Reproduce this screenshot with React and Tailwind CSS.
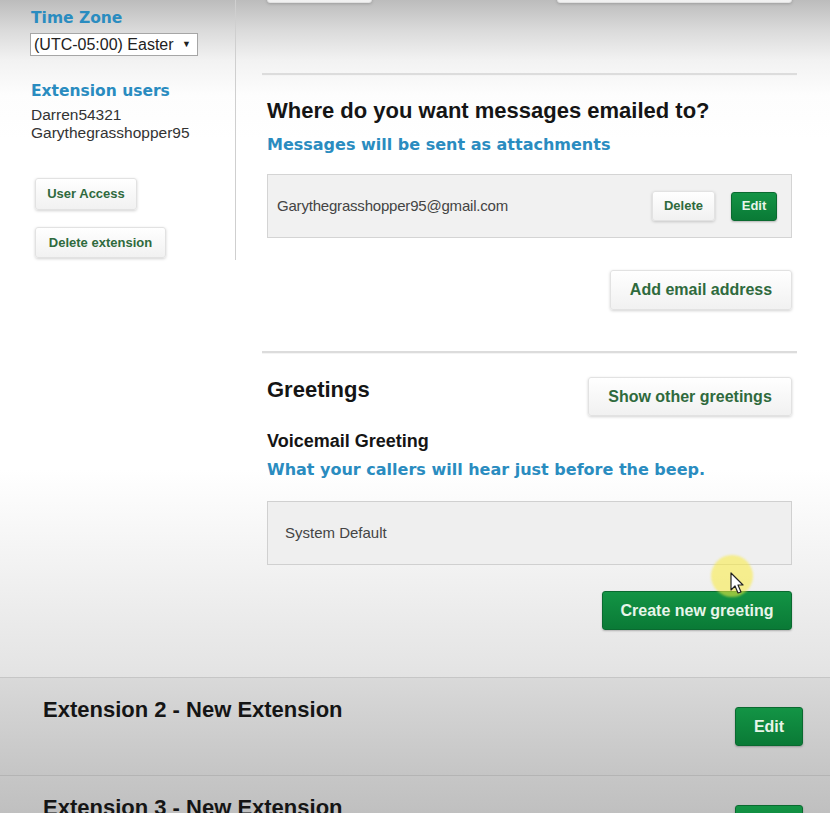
import React from "react";

const lightBtn =
  "rounded-[3px] border border-[#e2e2e2] bg-[linear-gradient(to_bottom,#ffffff,#f1f1f1)] shadow-[0_1px_3px_rgba(0,0,0,0.18)] text-[#2f6a3d] font-bold flex items-center justify-center";
const greenBtn =
  "rounded-[3px] border border-[#0a6a30] bg-[linear-gradient(to_bottom,#139445,#0a7a36)] shadow-[0_1px_2px_rgba(0,0,0,0.25)] text-[#e8f5ea] font-bold flex items-center justify-center";

export default function App() {
  return (
    <div className="relative w-[830px] h-[813px] overflow-hidden font-['Liberation_Sans',Arial,sans-serif] text-[#222]">
      {/* top section */}
      <div className="flex h-[677px] bg-[linear-gradient(to_bottom,#bcbcbc_0px,#dadada_30px,#f2f2f2_60px,#fdfdfd_95px,#ffffff_140px,#ffffff_470px,#f3f3f3_560px,#e3e3e3_677px)]">
        {/* sidebar */}
        <aside className="w-[236px] h-[260px] shrink-0 border-r border-[#cfcfcf] pl-[31px] pt-[8px] flex flex-col items-start">
          <div className="font-['DejaVu_Sans',sans-serif] font-bold text-[15.5px] leading-[20px] text-[#2a8cc0]">
            Time Zone
          </div>
          <div className="mt-[5px] -ml-[1px] w-[168px] h-[23px] border border-[#a6a6a6] bg-white flex items-center pl-[3px] pr-[6px] justify-between text-[16px] text-[#222]">
            <span>(UTC-05:00) Easter</span>
            <span className="text-[9px] text-[#222]">▼</span>
          </div>
          <div className="mt-[25px] font-['DejaVu_Sans',sans-serif] font-bold text-[15.5px] leading-[20px] text-[#2a8cc0]">
            Extension users
          </div>
          <div className="mt-[5px] text-[15.5px] leading-[18px] text-[#333]">Darren54321</div>
          <div className="text-[15.5px] leading-[18px] text-[#333]">Garythegrasshopper95</div>
          <button className={`${lightBtn} mt-[36px] ml-[4px] w-[102px] h-[32px] text-[13px]`}>
            User Access
          </button>
          <button className={`${lightBtn} mt-[17px] ml-[4px] w-[131px] h-[31px] text-[13px]`}>
            Delete extension
          </button>
        </aside>

        {/* main column */}
        <main className="w-[535px] ml-[26px] flex flex-col">
          <div className="flex justify-between px-[5px] -mt-[37px]">
            <div className={`${lightBtn} w-[105px] h-[40px]`} />
            <div className={`${lightBtn} w-[235px] h-[40px]`} />
          </div>
          <div className="mt-[70px] h-[2px] bg-[#dcdcdc] shadow-[0_1px_0_#f4f4f4]" />

          <div className="px-[5px] flex flex-col">
            <h2 className="mt-[23px] text-[22px] leading-[26px] font-bold text-[#151515]">
              Where do you want messages emailed to?
            </h2>
            <div className="mt-[11px] font-['DejaVu_Sans',sans-serif] font-bold text-[16px] leading-[20px] text-[#2a8cc0]">
              Messages will be sent as attachments
            </div>
            <div className="mt-[19px] h-[64px] border border-[#d4d4d4] bg-[#f1f1f1] flex items-center pl-[9px] pr-[14px]">
              <span className="text-[15px] text-[#444] tracking-[-0.2px]">Garythegrasshopper95@gmail.com</span>
              <div className="ml-auto flex items-center gap-[16px]">
                <button className={`${lightBtn} w-[63px] h-[30px] text-[13px]`}>Delete</button>
                <button className={`${greenBtn} w-[46px] h-[29px] text-[13px]`}>Edit</button>
              </div>
            </div>
            <button className={`${lightBtn} self-end mt-[32px] w-[182px] h-[40px] text-[16px]`}>
              Add email address
            </button>
          </div>

          <div className="mt-[41px] h-[2px] bg-[#dcdcdc] shadow-[0_1px_0_#f4f4f4]" />

          <div className="px-[5px] flex flex-col">
            <div className="mt-[24px] flex justify-between items-start">
              <h2 className="text-[22px] leading-[26px] font-bold text-[#151515]">Greetings</h2>
              <button className={`${lightBtn} w-[204px] h-[39px] text-[16px]`}>Show other greetings</button>
            </div>
            <div className="mt-[14px] text-[18px] leading-[22px] font-bold text-[#151515]">Voicemail Greeting</div>
            <div className="mt-[8px] font-['DejaVu_Sans',sans-serif] font-bold text-[16px] leading-[20px] text-[#2a8cc0]">
              What your callers will hear just before the beep.
            </div>
            <div className="mt-[21px] h-[64px] border border-[#d0d0d0] bg-[#efefef] flex items-center pl-[17px]">
              <span className="text-[15px] text-[#444]">System Default</span>
            </div>
            <button className={`${greenBtn} self-end mt-[26px] w-[190px] h-[39px] text-[16px]`}>
              Create new greeting
            </button>
          </div>
        </main>
      </div>

      {/* Extension 2 */}
      <div className="h-[98px] border-t border-[#c6c6c6] bg-[linear-gradient(to_bottom,#d9d9d9,#c5c5c5)] flex items-start justify-between pl-[43px] pr-[27px] pt-[19px]">
        <h3 className="text-[22px] leading-[26px] font-bold text-[#151515]">Extension 2 - New Extension</h3>
        <button className={`${greenBtn} mt-[10px] w-[68px] h-[39px] text-[16px]`}>Edit</button>
      </div>

      {/* Extension 3 */}
      <div className="h-[60px] border-t border-[#b4b4b4] bg-[linear-gradient(to_bottom,#c6c6c6,#bcbcbc)] flex items-start justify-between pl-[43px] pr-[27px] pt-[19px]">
        <h3 className="text-[22px] leading-[26px] font-bold text-[#151515]">Extension 3 - New Extension</h3>
        <button className={`${greenBtn} mt-[10px] w-[68px] h-[39px] text-[16px]`}>Edit</button>
      </div>

      {/* cursor highlight */}
      <div className="absolute left-[711px] top-[555px] w-[42px] h-[42px] rounded-full bg-[rgba(250,235,60,0.55)] blur-[1px]" />
      <svg className="absolute left-[730px] top-[572px]" width="16" height="24" viewBox="0 0 16 24">
        <path d="M1 1 L1 18 L5 14 L8 21 L11 20 L8 13 L13 13 Z" fill="#fff" stroke="#222" strokeWidth="1.2" strokeLinejoin="round" />
      </svg>
    </div>
  );
}
